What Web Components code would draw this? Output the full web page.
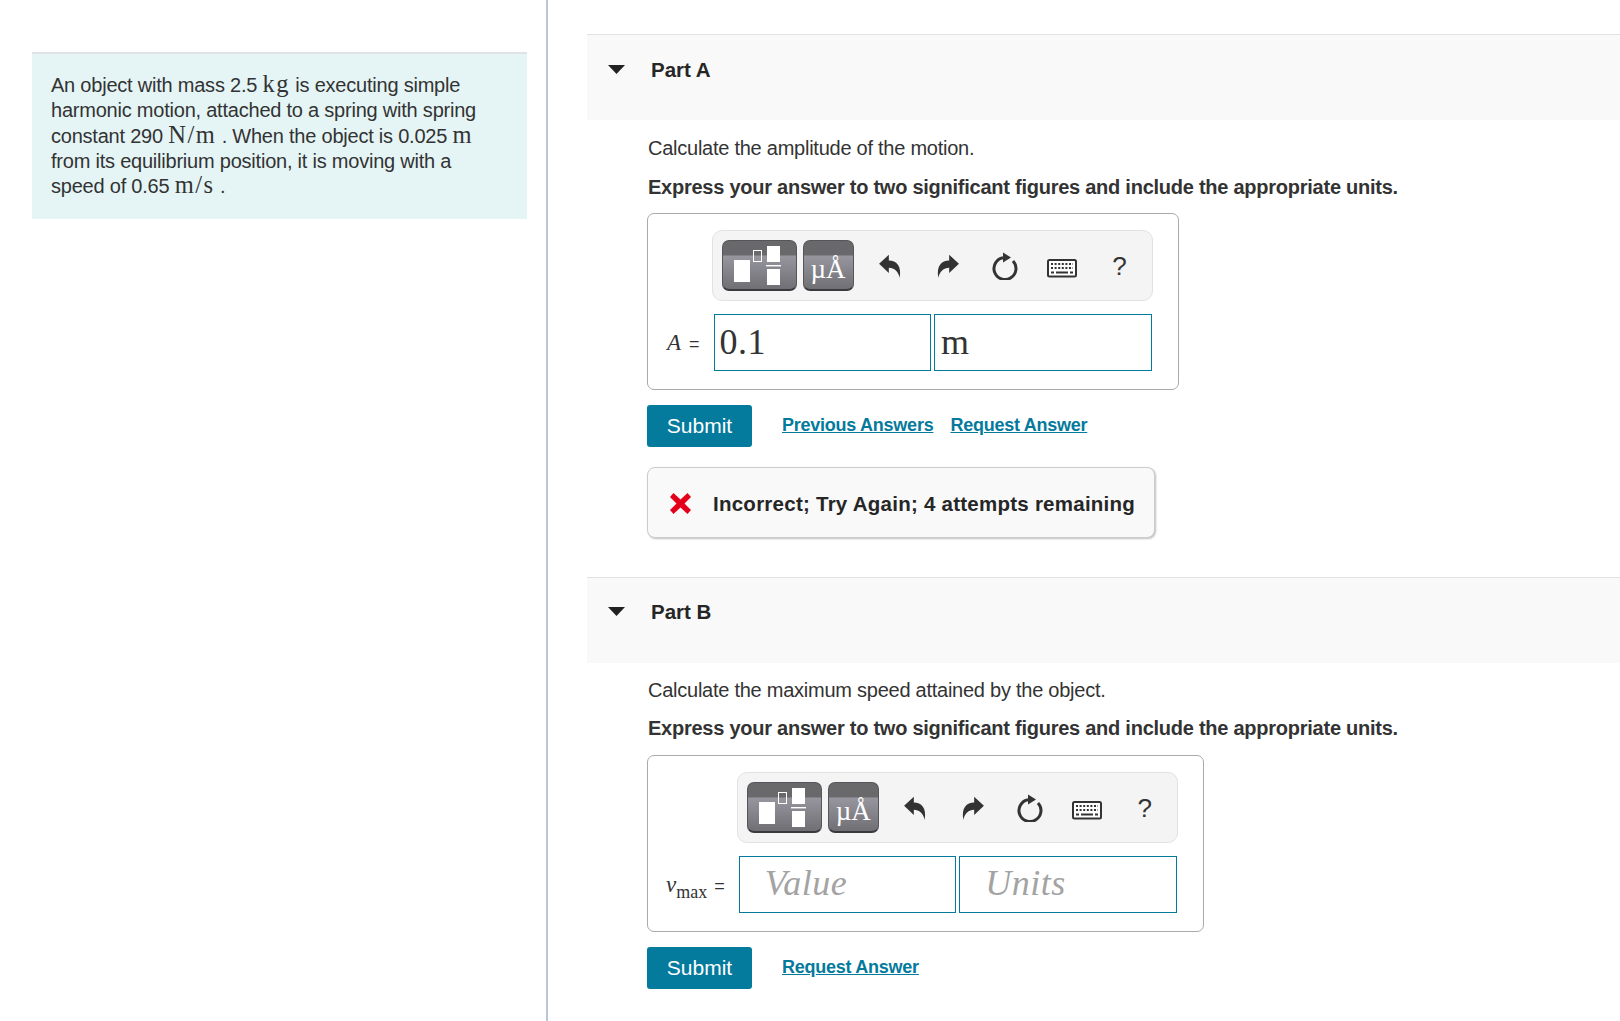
<!DOCTYPE html>
<html>
<head>
<meta charset="utf-8">
<title>Part A and Part B</title>
<style>
html, body { margin: 0; background: #fff; }
body { font-family: "Liberation Sans", Arial, sans-serif; color: #333; }
</style>
</head>
<body>
<quiz-page>
  <problem-text slot="left">An object with mass 2.5 <m-unit>kg</m-unit> is executing simple<br>harmonic motion, attached to a spring with spring<br>constant 290 <m-unit>N/m</m-unit> . When the object is 0.025 <m-unit>m</m-unit><br>from its equilibrium position, it is moving with a<br>speed of 0.65 <m-unit>m/s</m-unit> .</problem-text>

  <quiz-part title="Part A">
    <span slot="prompt">Calculate the amplitude of the motion.</span>
    <span slot="hint">Express your answer to two significant figures and include the appropriate units.</span>
    <answer-box value="0.1" units="m"><i slot="label" style="margin:0 1px;">A</i></answer-box>
    <submit-row prev></submit-row>
    <feedback-box>Incorrect; Try Again; 4 attempts remaining</feedback-box>
  </quiz-part>

  <quiz-part title="Part B" class="b">
    <span slot="prompt">Calculate the maximum speed attained by the object.</span>
    <span slot="hint">Express your answer to two significant figures and include the appropriate units.</span>
    <answer-box><span slot="label"><i>v</i><sub style="font-size:18px;line-height:0;">max</sub></span></answer-box>
    <submit-row></submit-row>
  </quiz-part>
</quiz-page>

<script>
class QuizPage extends HTMLElement {
    constructor() {
        super();
        this.attachShadow({ mode: "open" });
        this.shadowRoot.innerHTML = `
<style>
:host{ display: grid; grid-template-columns: 546px 2px 1fr; min-height: 1021px; }
.left{ padding: 52px 19px 0 32px; }
.rule{ background: #b9c6d6; }
.right{ padding: 34px 0 0 39px; display: flex; flex-direction: column; gap: 39px; }
</style>
<div class="left"><slot name="left"></slot></div>
<div class="rule"></div>
<div class="right"><slot></slot></div>`;
    }
}

class ProblemText extends HTMLElement {
    constructor() {
        super();
        this.attachShadow({ mode: "open" });
        this.shadowRoot.innerHTML = `
<style>
:host{
    display: block;
    background: #e5f5f6;
    border-top: 2px solid #dfe3e6;
    padding: 19px 20px 20px 19px;
    font-size: 20px;
    letter-spacing: -.22px;
    line-height: 25.3px;
    color: #333;
    white-space: nowrap;
}
</style>
<slot></slot>`;
    }
}

class MUnit extends HTMLElement {
    constructor() {
        super();
        this.attachShadow({ mode: "open" });
        this.shadowRoot.innerHTML = `
<style>
:host{ font-family: "Liberation Serif", serif; font-size: 24.500px; line-height: 0; letter-spacing: 1.500px; }
</style>
<slot></slot>`;
    }
}

class QuizPart extends HTMLElement {
    constructor() {
        super();
        this.attachShadow({ mode: "open" });
        this.shadowRoot.innerHTML = `
<style>
:host{ display: block; }
header{
    height: 86px;
    box-sizing: border-box;
    background: #f9f9f9;
    border-top: 1px solid #e2e2e2;
    display: flex;
    align-items: flex-start;
    padding: 22px 0 0 21px;
    gap: 26px;
    font-weight: bold;
    font-size: 20.500px;
    line-height: 25px;
    color: #262626;
}
:host(.b) header{ padding-top: 21px; }
header svg{ margin-top: 8px; }
.body{ padding: 16px 0 0 60px; }
:host(.b) .body{ padding-top: 15px; }
.prompt{ font-size: 20px; line-height: 25px; letter-spacing: -.25px; color: #333; padding-left: 1px; }
.hint{ font-size: 20px; line-height: 25px; font-weight: bold; letter-spacing: -.25px; color: #333; margin: 14px 0 13px; padding-left: 1px; }
:host(.b) .hint{ margin: 13px 0 14px; }
</style>
<header>
    <svg width="17" height="9" viewBox="0 0 17 9"><path d="M0 0H17L8.500 9Z" fill="#222"/></svg>
    <span id="t"></span>
</header>
<div class="body">
    <div class="prompt"><slot name="prompt"></slot></div>
    <div class="hint"><slot name="hint"></slot></div>
    <slot></slot>
</div>`;
        this.shadowRoot.querySelector("#t").textContent = this.getAttribute("title");
    }
}

const toolbarTemplate = document.createElement("template");
toolbarTemplate.innerHTML = `
<style>
:host{
    display: flex;
    align-items: center;
    width: 441px;
    height: 71px;
    box-sizing: border-box;
    background: #f4f4f4;
    border: 1px solid #e2e2e2;
    border-radius: 10px;
    padding: 0 0 0 9px;
}
.tpl{
    box-sizing: border-box;
    height: 51px;
    border-radius: 7px;
    border: 1px solid #55555a;
    border-bottom: 2px solid #3a3a3e;
    background: linear-gradient(#69696b 0 14px, #97969f 15px, #6f6f74 100%);
    color: #fff;
    position: relative;
    overflow: hidden;
}
.frac{ width: 75px; margin-right: 6px; }
.frac svg{ display: block; }
.mu{
    width: 51px;
    font: 27px/1 "Liberation Serif", serif;
    text-align: center;
    padding-top: 15px;
}
.ic{ display: flex; justify-content: center; width: 58px; color: #333; }
.ic svg{ display: block; }
.q{ font-size: 26px; line-height: 1; color: #333; width: 58px; text-align: center; }
</style>
<div class="tpl frac">
    <svg width="75" height="51" viewBox="0 0 75 51">
        <rect x="11" y="19" width="16" height="22" fill="#fff"/>
        <rect x="30.5" y="9.5" width="8" height="11" fill="none" stroke="#fff"/>
        <rect x="44" y="5" width="13" height="16" fill="#fff"/>
        <rect x="43" y="24" width="15" height="1.4" fill="#fff"/>
        <rect x="44" y="28" width="13" height="16" fill="#fff"/>
    </svg>
</div>
<div class="tpl mu">µÅ</div>
<div class="ic" style="margin-left:8px"><svg width="26" height="26" viewBox="0 0 24 24"><path d="M1 10 10 1.500V7C17 7 22 12 20 23 19 17 15 13.500 10 13.500V18.500Z" fill="#333"/></svg></div>
<div class="ic" style="margin-left:-2px"><svg width="26" height="26" viewBox="0 0 24 24"><path d="M23 10 14 1.500V7C7 7 2 12 4 23 5 17 9 13.500 14 13.500V18.500Z" fill="#333"/></svg></div>
<div class="ic" style="margin-top:-2px"><svg width="28" height="30" viewBox="0 0 28 30"><path d="M12 7.700A11 11 0 1 0 22 11" fill="none" stroke="#333" stroke-width="3"/><path d="M12 2.500 20 7.500 12 12.500Z" fill="#333"/></svg></div>
<div class="ic" style="margin:4px 0 0 -1px"><svg width="30" height="20" viewBox="0 0 30 20"><rect x="1" y="2" width="28" height="16.500" rx="1.500" fill="#fff" stroke="#333" stroke-width="2"/><path d="M4 6H26M4 10H26" stroke="#333" stroke-width="2" stroke-dasharray="2 1.600"/><path d="M4 14.500H7M9 14.500H21M23 14.500H26" stroke="#333" stroke-width="2"/></svg></div>
<div class="q">?</div>`;

class MathToolbar extends HTMLElement {
    constructor() {
        super();
        this.attachShadow({ mode: "open" });
        this.shadowRoot.appendChild(toolbarTemplate.content.cloneNode(true));
    }
}

class AnswerBox extends HTMLElement {
    constructor() {
        super();
        this.attachShadow({ mode: "open" });
        this.shadowRoot.innerHTML = `
<style>
:host{
    display: inline-flex;
    flex-direction: column;
    align-items: flex-end;
    box-sizing: border-box;
    border: 1px solid #aaa;
    border-radius: 7px;
    padding: 16px 25px 18px 18px;
    vertical-align: top;
}
.row{ display: flex; align-items: center; margin: 13px 1px 0 0; }
.label{ font: 23px "Liberation Serif", serif; color: #333; margin-right: 14px; white-space: nowrap; }
.eq{ font: 18px "Liberation Sans", sans-serif; margin-left: 7px; }
.field{
    box-sizing: border-box;
    width: 217.500px;
    height: 57px;
    border: 1px solid #047a9c;
    font: 36px/54px "Liberation Serif", serif;
    letter-spacing: .5px;
    color: #333;
    padding: 0 5px;
    white-space: nowrap;
}
.field + .field{ margin-left: 3px; padding-left: 6px; }
.field.ph{ font-style: italic; color: #a3a3a3; padding-left: 25px; letter-spacing: .5px; line-height: 52px; }
</style>
<math-toolbar></math-toolbar>
<div class="row">
    <div class="label"><slot name="label"></slot><span class="eq">=</span></div>
    <div class="field" id="v"></div>
    <div class="field" id="u"></div>
</div>`;
        const value = this.getAttribute("value");
        const units = this.getAttribute("units");
        const v = this.shadowRoot.querySelector("#v");
        const u = this.shadowRoot.querySelector("#u");
        v.textContent = value ? value : "Value";
        u.textContent = units ? units : "Units";
        if (!value) v.classList.add("ph");
        if (!units) u.classList.add("ph");
    }
}

class SubmitRow extends HTMLElement {
    constructor() {
        super();
        this.attachShadow({ mode: "open" });
        const prev = this.hasAttribute("prev") ? `<a href="#">Previous Answers</a>` : "";
        this.shadowRoot.innerHTML = `
<style>
:host{ display: flex; align-items: center; margin-top: 15px; }
button{
    width: 105px;
    height: 42px;
    border: 0;
    border-radius: 3px;
    background: #047a9c;
    color: #fff;
    font: 21px "Liberation Sans", sans-serif;
    margin-right: 30px;
    padding: 0;
}
a{
    color: #047a9c;
    font-weight: bold;
    font-size: 18px;
    letter-spacing: -.25px;
    margin-right: 17px;
    position: relative;
    top: -1px;
}
</style>
<button>Submit</button>${prev}<a href="#">Request Answer</a>`;
    }
}

class FeedbackBox extends HTMLElement {
    constructor() {
        super();
        this.attachShadow({ mode: "open" });
        this.shadowRoot.innerHTML = `
<style>
:host{
    display: flex;
    align-items: center;
    box-sizing: border-box;
    width: 508px;
    height: 71px;
    margin-top: 20px;
    padding: 2px 0 0 22px;
    gap: 22px;
    background: #f9f9f9;
    border: 1px solid #ccc;
    border-radius: 8px;
    box-shadow: 1px 1px 2px rgba(0,0,0,.25);
    font-weight: bold;
    font-size: 20.500px;
    letter-spacing: .25px;
    color: #262626;
    white-space: nowrap;
}
svg{ display: block; flex: none; }
</style>
<svg width="21" height="21" viewBox="0 0 21 21"><path d="M3.500 0 10.500 6.500 17.500 0 21 4 14.500 10.500 21 17 17.500 21 10.500 14.500 3.500 21 0 17 6.500 10.500 0 4Z" fill="#e2001a"/></svg>
<span><slot></slot></span>`;
    }
}

customElements.define("quiz-page", QuizPage);
customElements.define("problem-text", ProblemText);
customElements.define("m-unit", MUnit);
customElements.define("quiz-part", QuizPart);
customElements.define("math-toolbar", MathToolbar);
customElements.define("answer-box", AnswerBox);
customElements.define("submit-row", SubmitRow);
customElements.define("feedback-box", FeedbackBox);
</script>
</body>
</html>
